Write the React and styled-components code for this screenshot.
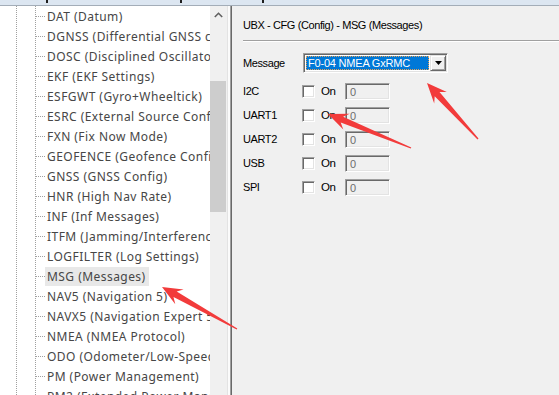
import React from 'react'
import styled, { createGlobalStyle } from 'styled-components'

const GlobalStyle = createGlobalStyle`
  html, body {
    margin: 0;
    padding: 0;
    background: #f0f0f0;
  }
  * { box-sizing: border-box; }
`

const treeItems = [
    'DAT (Datum)',
    'DGNSS (Differential GNSS configuration)',
    'DOSC (Disciplined Oscillator)',
    'EKF (EKF Settings)',
    'ESFGWT (Gyro+Wheeltick)',
    'ESRC (External Source Config)',
    'FXN (Fix Now Mode)',
    'GEOFENCE (Geofence Config)',
    'GNSS (GNSS Config)',
    'HNR (High Nav Rate)',
    'INF (Inf Messages)',
    'ITFM (Jamming/Interference Monitor)',
    'LOGFILTER (Log Settings)',
    'MSG (Messages)',
    'NAV5 (Navigation 5)',
    'NAVX5 (Navigation Expert 5)',
    'NMEA (NMEA Protocol)',
    'ODO (Odometer/Low-Speed COG Filter)',
    'PM (Power Management)',
    'PM2 (Extended Power Management)',
]

const ports = ['I2C', 'UART1', 'UART2', 'USB', 'SPI']

// tip, tail of each red annotation arrow
const arrows = [
    { tip: [162, 287], tail: [237, 329] },
    { tip: [328, 114], tail: [411, 148] },
    { tip: [427, 83], tail: [478, 139] },
]

function arrowPoints({ tip, tail }) {
    const dx = tip[0] - tail[0]
    const dy = tip[1] - tail[1]
    const len = Math.hypot(dx, dy)
    const ux = dx / len, uy = dy / len
    const nx = -uy, ny = ux
    const H = 20, W = 8.5, w = 3.2
    const p = (along, side) => [
        tip[0] - ux * along + nx * side,
        tip[1] - uy * along + ny * side,
    ]
    const pts = [
        tip,
        p(H, W),
        p(H - 5, w),
        [tail[0] + nx * 0.7, tail[1] + ny * 0.7],
        [tail[0] - nx * 0.7, tail[1] - ny * 0.7],
        p(H - 5, -w),
        p(H, -W),
    ]
    return pts.map(([x, y]) => `${x.toFixed(1)},${y.toFixed(1)}`).join(' ')
}

function App() {
    return (
        <Screen>
            <GlobalStyle />
            <HeaderStrip>
                <Tick $left={46} />
                <Tick $left={132} />
                <Tick $left={80} />
            </HeaderStrip>

            <Body>
                <TreePane>
                    <TreeView>
                        <Guide $w={17} />
                        <Guide $w={19} />
                        <Items>
                            {treeItems.map((item) => (
                                <TreeRow key={item}>
                                    <Connector />
                                    <Label $selected={item.startsWith('MSG')}>{item}</Label>
                                </TreeRow>
                            ))}
                        </Items>
                    </TreeView>
                    <Scrollbar>
                        <ScrollButton>
                            <svg width="9" height="6" viewBox="0 0 9 6">
                                <polyline points="0.8,5 4.5,1.3 8.2,5" fill="none" stroke="#606060" strokeWidth="1.6" />
                            </svg>
                        </ScrollButton>
                        <Thumb />
                    </Scrollbar>
                </TreePane>

                <Splitter />

                <ConfigPanel>
                    <Title>UBX - CFG (Config) - MSG (Messages)</Title>
                    <Separator />

                    <MessageRow>
                        <FieldLabel>Message</FieldLabel>
                        <Combo>
                            <ComboValue>F0-04 NMEA GxRMC</ComboValue>
                            <ComboButton>
                                <svg width="7" height="4" viewBox="0 0 7 4">
                                    <polygon points="0,0 7,0 3.5,4" fill="#000" />
                                </svg>
                            </ComboButton>
                        </Combo>
                    </MessageRow>

                    <PortList>
                        {ports.map((port) => (
                            <PortRow key={port}>
                                <FieldLabel>{port}</FieldLabel>
                                <Checkbox />
                                <OnLabel>On</OnLabel>
                                <RateBox>0</RateBox>
                            </PortRow>
                        ))}
                    </PortList>
                </ConfigPanel>
            </Body>

            <Annotations width="559" height="395" viewBox="0 0 559 395">
                {arrows.map((a, i) => (
                    <polygon key={i} points={arrowPoints(a)} fill="#f23b3b" />
                ))}
            </Annotations>
        </Screen>
    )
}

const Screen = styled.div`
    position: relative;
    width: 559px;
    height: 395px;
    overflow: hidden;
    display: flex;
    flex-direction: column;
    background: #f0f0f0;
`

const HeaderStrip = styled.div`
    height: 6px;
    flex-shrink: 0;
    background: #dce6f1;
    border-bottom: 1px solid #a3adb8;
    display: flex;
    align-items: flex-start;
`

const Tick = styled.span`
    width: 2px;
    height: 3px;
    margin-left: ${p => p.$left}px;
    background: #1e1e1e;
`

const Body = styled.div`
    flex: 1;
    min-height: 0;
    display: flex;
`

const TreePane = styled.div`
    width: 227px;
    display: flex;
    background: #fff;
`

const TreeView = styled.div`
    width: 210px;
    display: flex;
    overflow: hidden;
    background: #fff;
`

const Guide = styled.div`
    width: ${p => p.$w}px;
    flex-shrink: 0;
    border-right: 1px dotted #a0a0a0;
`

const Items = styled.div`
    flex: 1;
    min-width: 0;
    display: flex;
    flex-direction: column;
`

const TreeRow = styled.div`
    height: 20px;
    flex-shrink: 0;
    display: flex;
    align-items: center;
`

const Connector = styled.span`
    width: 9px;
    flex-shrink: 0;
    border-top: 1px dotted #a0a0a0;
`

const Label = styled.span`
    height: 19px;
    padding: 0 3px 0 2px;
    display: flex;
    align-items: center;
    white-space: nowrap;
    font-family: "Noto Sans", "Open Sans", sans-serif;
    font-size: 12px;
    letter-spacing: 0.45px;
    color: #464646;
    background: ${p => (p.$selected ? '#e8e8e8' : 'transparent')};
`

const Scrollbar = styled.div`
    width: 17px;
    display: flex;
    flex-direction: column;
    background: #f0f0f0;
`

const ScrollButton = styled.div`
    height: 17px;
    display: flex;
    align-items: center;
    justify-content: center;
`

const Thumb = styled.div`
    margin-top: 58px;
    margin-right: 1px;
    height: 131px;
    background: #cdcdcd;
`

const Splitter = styled.div`
    width: 3px;
    border-left: 1px solid #e3e3e3;
    background: #fbfbfb;
`

const ConfigPanel = styled.div`
    flex: 1;
    display: flex;
    flex-direction: column;
    padding: 12px 0 0 12px;
    border-left: 1px solid #a0a0a0;
    box-shadow: inset 1px 0 0 #696969;
    font-family: "Liberation Sans", Arial, sans-serif;
    font-size: 11px;
    letter-spacing: -0.4px;
    color: #000;
`

const Title = styled.div`
    height: 14px;
    line-height: 14px;
`

const Separator = styled.div`
    margin-top: 8px;
    height: 2px;
    border-top: 1px solid #a0a0a0;
    border-bottom: 1px solid #fff;
`

const MessageRow = styled.div`
    margin-top: 11px;
    height: 20px;
    display: flex;
    align-items: center;
`

const FieldLabel = styled.span`
    width: 59px;
    flex-shrink: 0;
`

const Combo = styled.div`
    margin-left: 1px;
    width: 145px;
    height: 20px;
    padding: 1px;
    display: flex;
    background: #fff;
    border: 1px solid;
    border-color: #a0a0a0 #fff #fff #a0a0a0;
    box-shadow: inset 1px 1px 0 #696969, inset -1px -1px 0 #e3e3e3;
`

const ComboValue = styled.div`
    flex: 1;
    margin: 1px;
    padding-left: 2px;
    display: flex;
    align-items: center;
    background: #0078d7;
    outline: 1px dotted #e2a15a;
    outline-offset: -1px;
    color: #fff;
    letter-spacing: -0.2px;
`

const ComboButton = styled.div`
    width: 16px;
    display: flex;
    align-items: center;
    justify-content: center;
    background: #f0f0f0;
    border: 1px solid;
    border-color: #e3e3e3 #696969 #696969 #e3e3e3;
    box-shadow: inset 1px 1px 0 #fff, inset -1px -1px 0 #a0a0a0;
`

const PortList = styled.div`
    margin-top: 6px;
    display: flex;
    flex-direction: column;
`

const PortRow = styled.div`
    height: 24px;
    display: flex;
    align-items: center;
`

const Checkbox = styled.span`
    width: 13px;
    height: 13px;
    background: #fff;
    border: 1px solid;
    border-color: #a0a0a0 #fff #fff #a0a0a0;
    box-shadow: inset 1px 1px 0 #696969, inset -1px -1px 0 #e3e3e3;
`

const OnLabel = styled.span`
    width: 30px;
    padding-left: 6px;
    font-size: 11.5px;
`

const RateBox = styled.span`
    width: 45px;
    height: 17px;
    padding: 1px 0 0 4px;
    display: flex;
    align-items: center;
    background: #f0f0f0;
    color: #6d6d6d;
    border: 1px solid;
    border-color: #a0a0a0 #fff #fff #a0a0a0;
    box-shadow: inset 1px 1px 0 #696969, inset -1px -1px 0 #e3e3e3;
`

const Annotations = styled.svg`
    position: absolute;
    left: 0;
    top: 0;
    pointer-events: none;
`

export default App
